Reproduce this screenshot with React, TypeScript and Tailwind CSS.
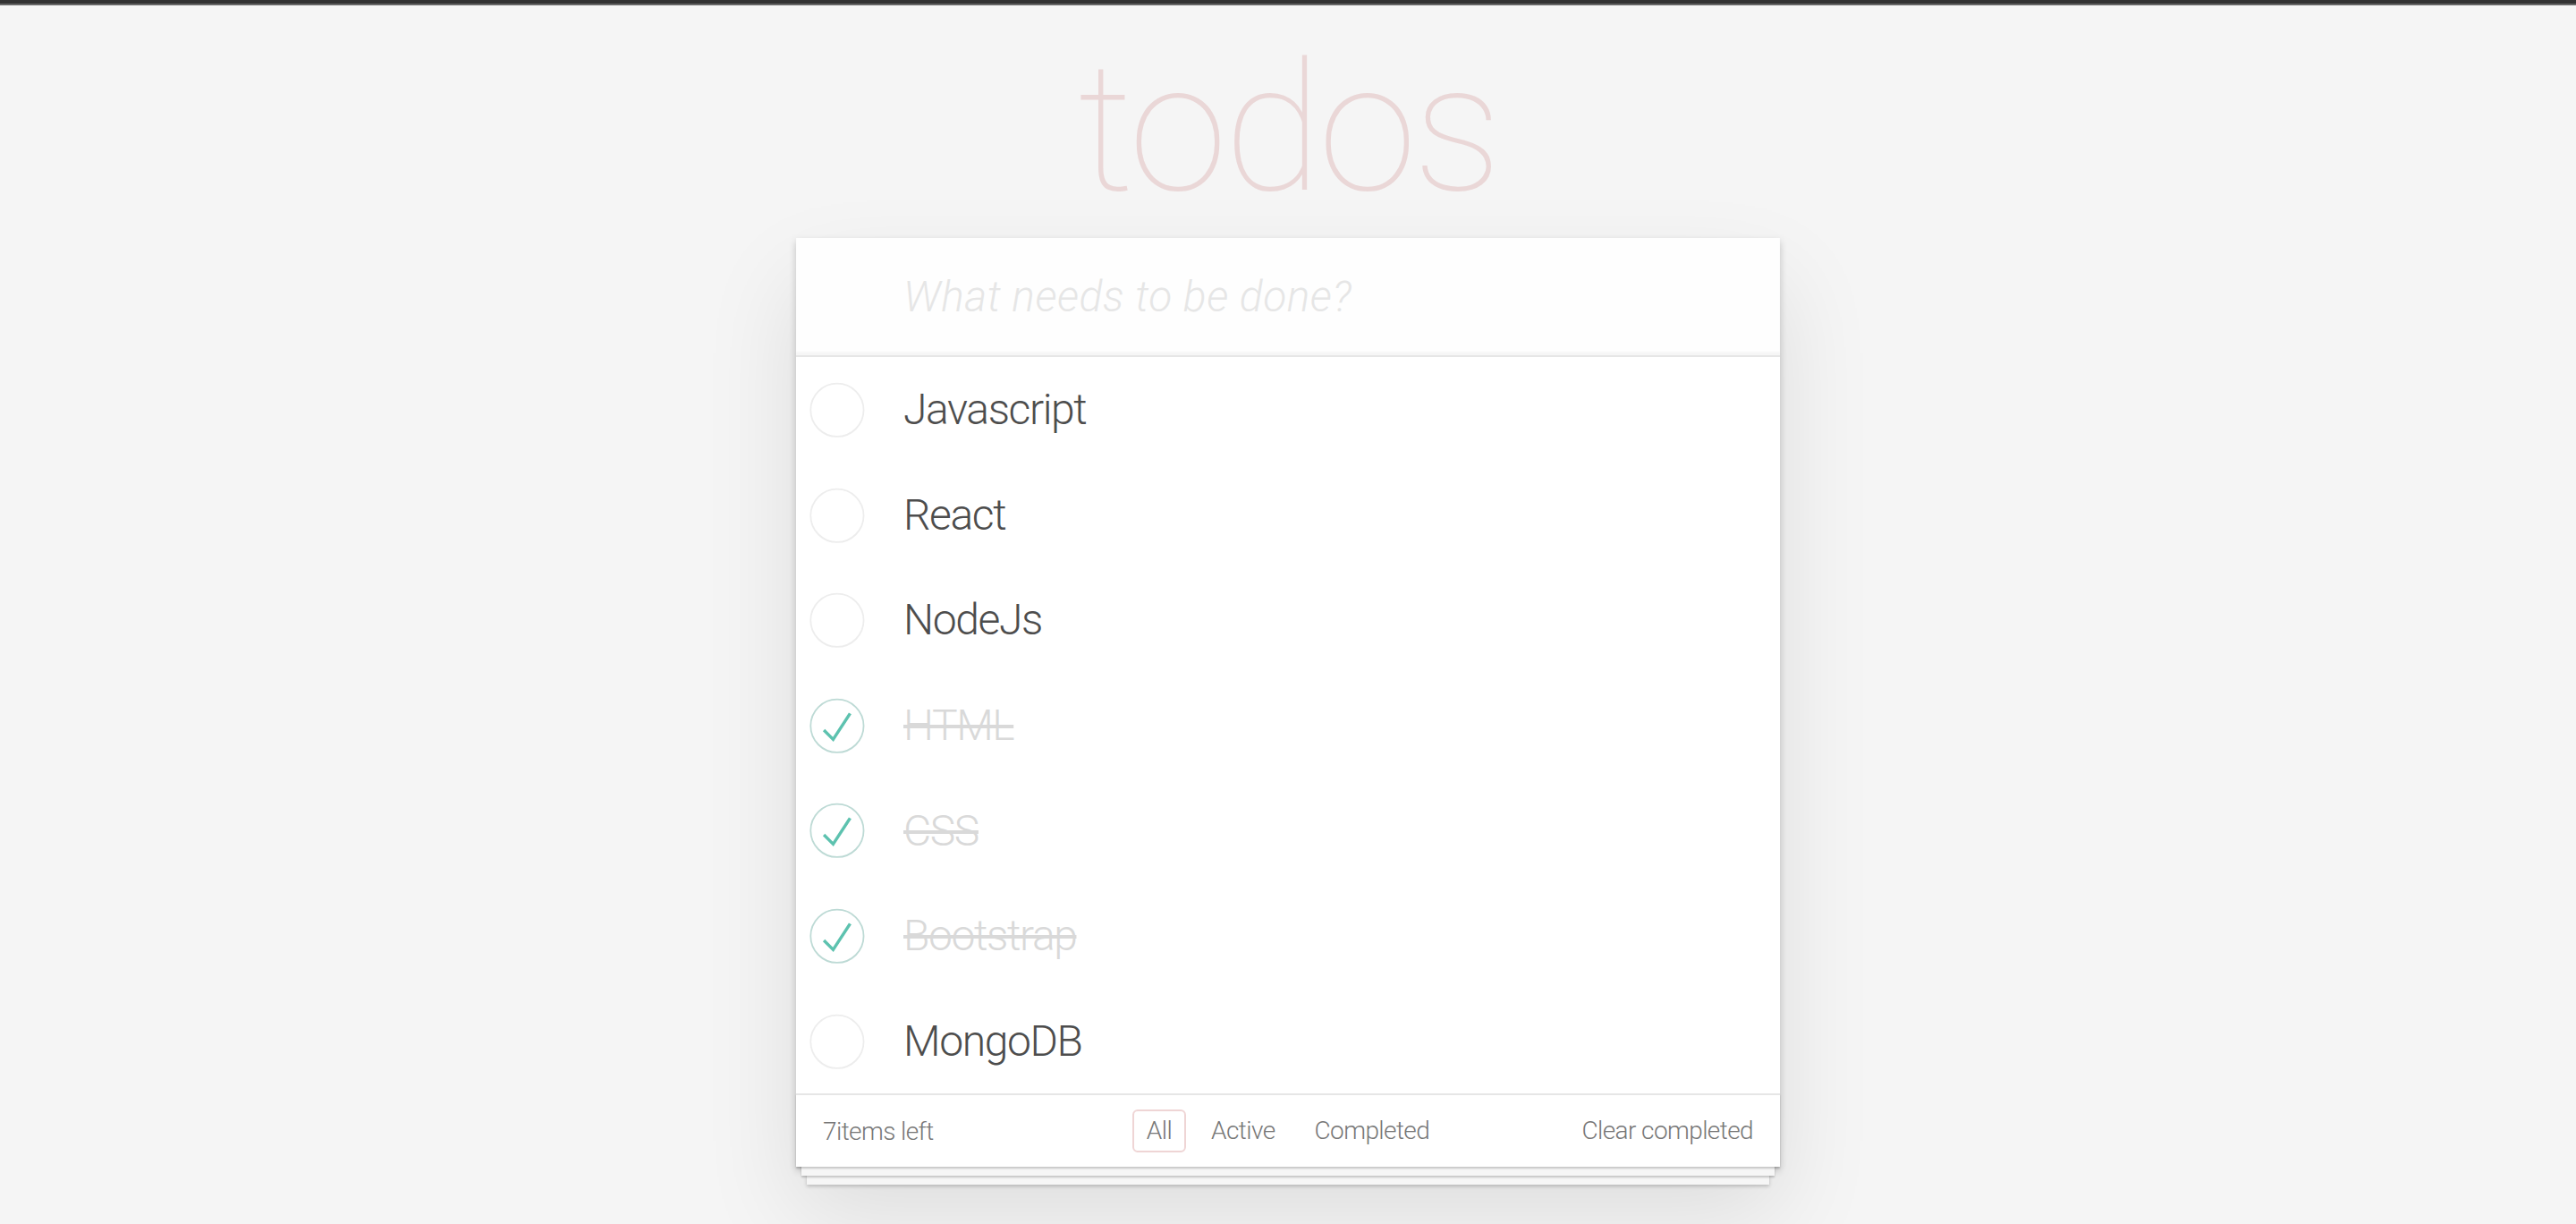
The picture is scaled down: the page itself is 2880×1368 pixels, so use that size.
import { useState } from 'react';

type Todo = { id: number; title: string; completed: boolean };

const initialTodos: Todo[] = [
  { id: 1, title: 'Javascript', completed: false },
  { id: 2, title: 'React', completed: false },
  { id: 3, title: 'NodeJs', completed: false },
  { id: 4, title: 'HTML', completed: true },
  { id: 5, title: 'CSS', completed: true },
  { id: 6, title: 'Bootstrap', completed: true },
  { id: 7, title: 'MongoDB', completed: false },
];

const filters = ['All', 'Active', 'Completed'];

function Toggle({ checked, onClick }: { checked: boolean; onClick: () => void }) {
  return (
    <svg width="80" height="80" viewBox="-10 -18 100 135" className="shrink-0 cursor-pointer" onClick={onClick}>
      <circle cx="50" cy="50" r="50" fill="none" stroke={checked ? '#bddad5' : '#ededed'} strokeWidth="3" />
      {checked && <path fill="#5dc2af" d="M72 25L42 71 27 56l-4 4 20 20 34-52z" />}
    </svg>
  );
}

export default function App() {
  const [todos, setTodos] = useState(initialTodos);
  const [filter, setFilter] = useState('All');

  const toggle = (id: number) =>
    setTodos(todos.map((t) => (t.id === id ? { ...t, completed: !t.completed } : t)));

  return (
    <div className="min-h-screen bg-[#f5f5f5] font-['Roboto',sans-serif] font-light text-[#4d4d4d]">
      <div className="h-[4px] bg-[#333]" />
      <div className="h-[2px] bg-[#666]" />

      <header className="h-[260px] pt-[38px] text-center">
        <h1 className="text-[200px] leading-none font-thin tracking-[-4px] text-[rgba(175,47,47,0.15)]">todos</h1>
      </header>

      <section className="mx-auto w-[1100px] bg-white shadow-[0_4px_8px_0_rgba(0,0,0,0.2),0_50px_100px_0_rgba(0,0,0,0.1)]">
        <input
          className="block h-[131.2px] w-full bg-[rgba(0,0,0,0.003)] pl-[120px] pr-[32px] text-[48px] font-light tracking-[0.5px] text-[#4d4d4d] shadow-[inset_0_-4px_2px_rgba(0,0,0,0.03)] outline-none placeholder:italic placeholder:font-light placeholder:text-[#e6e6e6]"
          placeholder="What needs to be done?"
        />

        <ul className="border-t-2 border-[#e6e6e6]">
          {todos.map((todo) => (
            <li key={todo.id} className="flex h-[117.6px] items-center">
              <Toggle checked={todo.completed} onClick={() => toggle(todo.id)} />
              <label
                className={
                  todo.completed
                    ? 'pl-[40px] text-[48px] leading-[1.2] tracking-[-1.4px] text-[#d9d9d9] line-through'
                    : 'pl-[40px] text-[48px] leading-[1.2] tracking-[-1.4px] text-[#4d4d4d]'
                }
              >
                {todo.title}
              </label>
            </li>
          ))}
        </ul>

        <footer className="grid h-[82px] grid-cols-[1fr_auto_1fr] items-center border-t-2 border-[#e6e6e6] px-[30px] text-[28px] leading-[39.2px] tracking-[-0.6px] text-[#777] shadow-[0_2px_2px_rgba(0,0,0,0.2),0_16px_0_-6px_#f6f6f6,0_18px_2px_-6px_rgba(0,0,0,0.2),0_32px_0_-12px_#f6f6f6,0_34px_4px_-12px_rgba(0,0,0,0.2)]">
          <span>
            <strong className="font-light">7</strong>items left
          </span>
          <ul className="flex gap-[12px]">
            {filters.map((f) => (
              <li key={f}>
                <a
                  href="#"
                  onClick={() => setFilter(f)}
                  className={
                    filter === f
                      ? 'block rounded-[6px] border-2 border-[rgba(175,47,47,0.2)] px-[14px] py-[6px] leading-[32px]'
                      : 'block rounded-[6px] border-2 border-transparent px-[14px] py-[6px] leading-[32px]'
                  }
                >
                  {f}
                </a>
              </li>
            ))}
          </ul>
          <button className="justify-self-end cursor-pointer leading-[40px]">Clear completed</button>
        </footer>
      </section>
    </div>
  );
}
